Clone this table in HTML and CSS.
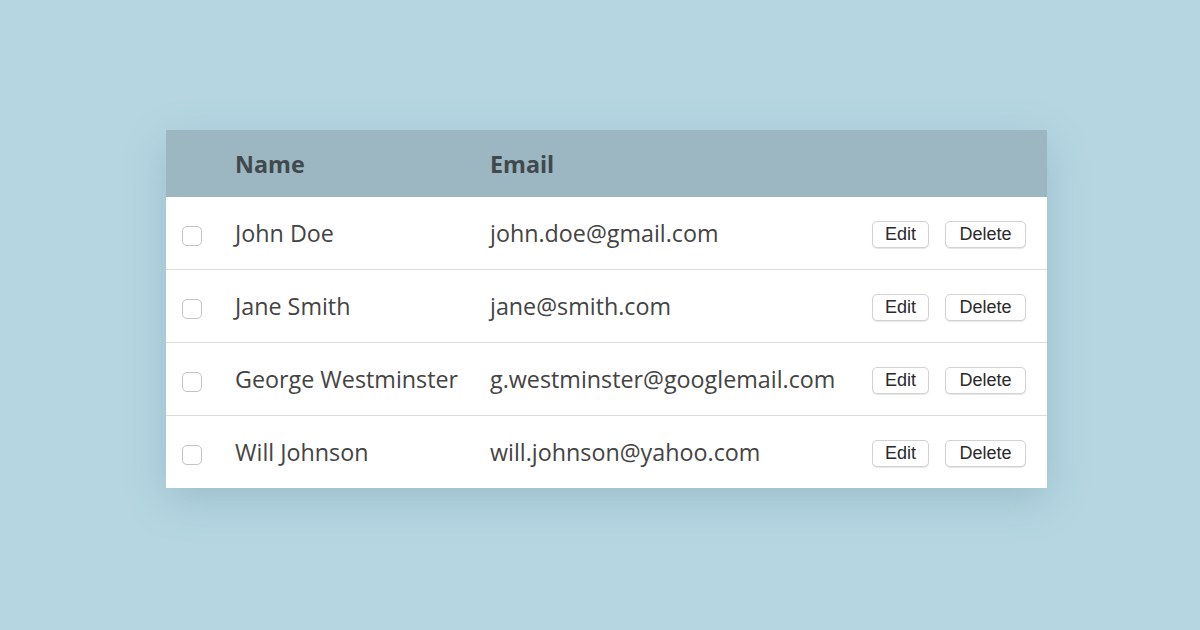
FILE: index.html
```html
<!DOCTYPE html>
<html>
<head>
<meta charset="utf-8">
<link rel="stylesheet" href="styles.css">
</head>
<body>
<div class="page">
  <table class="users">
    <thead>
      <tr>
        <th class="c-check"></th>
        <th class="c-name">Name</th>
        <th class="c-email">Email</th>
        <th class="c-actions"></th>
      </tr>
    </thead>
    <tbody>
      <tr>
        <td class="c-check"><span class="box"></span></td>
        <td class="c-name">John Doe</td>
        <td class="c-email">john.doe@gmail.com</td>
        <td class="c-actions"><button class="btn btn-edit">Edit</button><button class="btn btn-del">Delete</button></td>
      </tr>
      <tr>
        <td class="c-check"><span class="box"></span></td>
        <td class="c-name">Jane Smith</td>
        <td class="c-email">jane@smith.com</td>
        <td class="c-actions"><button class="btn btn-edit">Edit</button><button class="btn btn-del">Delete</button></td>
      </tr>
      <tr>
        <td class="c-check"><span class="box"></span></td>
        <td class="c-name">George Westminster</td>
        <td class="c-email">g.westminster@googlemail.com</td>
        <td class="c-actions"><button class="btn btn-edit">Edit</button><button class="btn btn-del">Delete</button></td>
      </tr>
      <tr>
        <td class="c-check"><span class="box"></span></td>
        <td class="c-name">Will Johnson</td>
        <td class="c-email">will.johnson@yahoo.com</td>
        <td class="c-actions"><button class="btn btn-edit">Edit</button><button class="btn btn-del">Delete</button></td>
      </tr>
    </tbody>
  </table>
</div>
</body>
</html>
```

FILE: styles.css
```css
html, body {
  margin: 0;
  padding: 0;
  background: #b6d7e2;
  width: 1200px;
  height: 630px;
  overflow: hidden;
}
.page {
  padding-top: 130px;
  padding-left: 166px;
}
.users {
  width: 881px;
  border-collapse: collapse;
  background: #fff;
  font-family: "Open Sans", sans-serif;
  color: #444;
  box-shadow: 0 12px 40px rgba(60, 100, 120, 0.22);
}
.users thead tr {
  background: #9cb7c2;
  height: 67px;
}
.users th {
  text-align: left;
  font-size: 23.3px;
  font-weight: 700;
  color: #41494d;
  padding: 0;
}
.users td {
  padding: 0;
  font-size: 23.3px;
  height: 72px;
  border-top: 1px solid #dcdcdc;
}
.users tbody tr:first-child td {
  border-top: none;
}
.c-check {
  width: 69px;
  padding-left: 16px !important;
  box-sizing: border-box;
}
.c-name {
  width: 255px;
}
.c-actions {
  text-align: right;
  padding-right: 21px !important;
  white-space: nowrap;
}
.box {
  display: block;
  width: 18px;
  height: 18px;
  margin-top: 5px;
  border: 1px solid #c4c4c4;
  border-radius: 5px;
  background: #fff;
}
.btn {
  font-family: "Liberation Sans", Arial, sans-serif;
  font-size: 18px;
  color: #2a2a2a;
  background: #fff;
  border: 1px solid #d2d2d2;
  border-radius: 5px;
  height: 27px;
  padding: 0;
  margin-bottom: 2px;
  box-shadow: 0 1px 1px rgba(0,0,0,0.1);
  vertical-align: middle;
}
.btn-edit {
  width: 57px;
}
.btn-del {
  width: 81px;
  margin-left: 16px;
}
```
